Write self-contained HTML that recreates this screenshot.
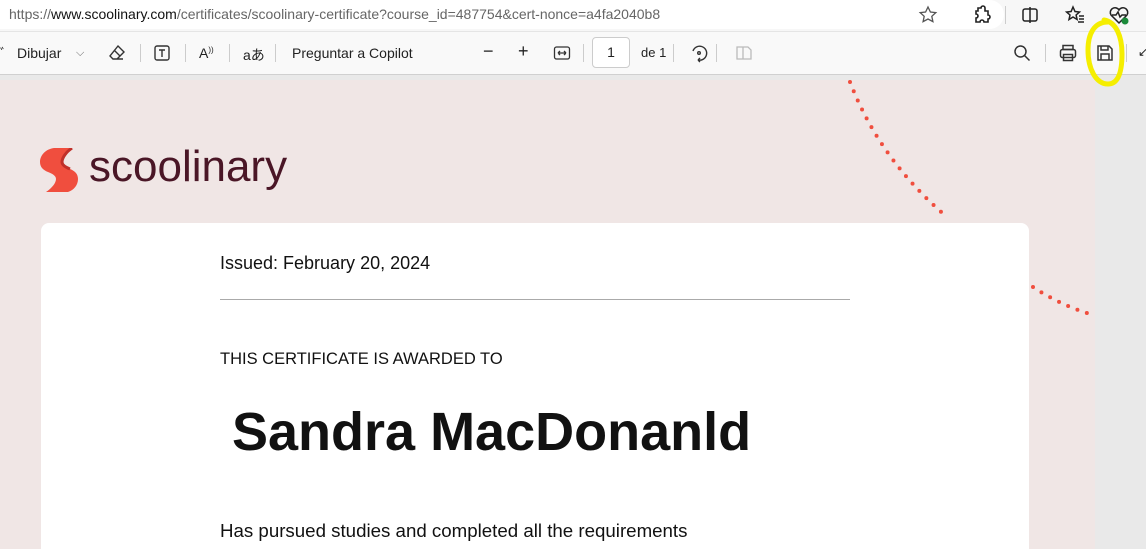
<!DOCTYPE html>
<html style="overflow:hidden"><head><style>
html,body{overflow:hidden;height:549px}
body{margin:0;width:1146px;height:549px;overflow:hidden;position:relative;font-family:"Liberation Sans",sans-serif;background:#e9e9e9}
.addr{position:absolute;left:0;top:0;width:1146px;height:31px;background:#f7f7f7}
.url{position:absolute;left:0;top:0;width:1004px;height:29px;background:#fff;border-radius:0 15px 15px 0;font-size:14px;color:#666;line-height:29px;padding-left:9px;box-sizing:border-box}
.url b{font-weight:normal;color:#111}
.tb{position:absolute;left:0;top:31px;width:1146px;height:42px;background:#f9f9f9;border-top:1px solid #e5e5e5;border-bottom:1px solid #d0d0d0;font-size:14px;color:#222}
.tb span{position:absolute;top:13px}
.sep{position:absolute;top:12px;width:1px;height:18px;background:#ccc}
.page{position:absolute;left:0;top:80px;width:1095px;height:469px;background:#f0e6e5;overflow:hidden}
.card{position:absolute;left:41px;top:143px;width:988px;height:340px;background:#fff;border-radius:8px}
.t{position:absolute;color:#111;white-space:nowrap}
</style></head><body>
<div class="addr"><div class="url">https://<b>www.scoolinary.com</b>/certificates/scoolinary-certificate?course_id=487754&amp;cert-nonce=a4fa2040b8</div>
<svg style="position:absolute;left:918px;top:5px" width="20" height="20" viewBox="0 0 20 20"><path d="M10 2l2.4 5 5.4.6-4 3.7 1.1 5.3L10 14l-4.9 2.6 1.1-5.3-4-3.7 5.4-.6z" fill="none" stroke="#555" stroke-width="1.3"/></svg>
<svg style="position:absolute;left:970px;top:4px" width="22" height="22" viewBox="0 0 22 22" fill="none" stroke="#222" stroke-width="1.6"><path d="M8 4h3a2 2 0 014 0v3h3v4a2 2 0 010 4v3h-4a2 2 0 00-4 0H6v-4a2 2 0 000-4V7h2z"/></svg>
<div class="sep" style="top:6px;left:1005px;height:18px"></div>
<svg style="position:absolute;left:1020px;top:5px" width="20" height="20" viewBox="0 0 20 20" fill="none" stroke="#222" stroke-width="1.5"><rect x="3" y="4" width="14" height="12" rx="2"/><path d="M10 2v16"/></svg>
<svg style="position:absolute;left:1064px;top:4px" width="22" height="22" viewBox="0 0 22 22" fill="none" stroke="#222" stroke-width="1.5"><path d="M9 3l2 4.5 4.5.5-3.4 3 1 4.5L9 13l-4 2.5 1-4.5-3.4-3 4.5-.5z"/><path d="M15 12h5M15 15h5M14 18h6"/></svg>
<svg style="position:absolute;left:1108px;top:4px" width="22" height="22" viewBox="0 0 22 22" fill="none" stroke="#222" stroke-width="1.5"><path d="M11 19L3 11a4.5 4.5 0 018-5 4.5 4.5 0 018 5z"/><path d="M4 11h4l2-3 2 5 2-2h4"/><circle cx="17" cy="17" r="3.5" fill="#1a8a3a" stroke="none"/></svg>
</div>
<div class="tb">
<span style="left:0;top:12px">ﾞ</span><span style="left:17px">Dibujar</span><span style="left:76px;font-size:11px;color:#666;top:15px">⌵</span>
<svg style="position:absolute;left:107px;top:11px" width="20" height="20" viewBox="0 0 20 20" fill="none" stroke="#333" stroke-width="1.4"><path d="M11 3l6 6-7 7H6l-3-3zM7 7l6 6M6 16h10"/></svg>
<div class="sep" style="left:140px"></div>
<svg style="position:absolute;left:153px;top:12px" width="18" height="18" viewBox="0 0 18 18" fill="none" stroke="#333" stroke-width="1.4"><rect x="2" y="2" width="14" height="14" rx="2"/><path d="M6 6h6M9 6v7"/></svg>
<div class="sep" style="left:185px"></div>
<span style="left:199px">A<sup style="font-size:8px">))</sup></span>
<div class="sep" style="left:229px"></div>
<span style="left:243px;font-family:'Liberation Sans','Noto Sans CJK JP',sans-serif">aあ</span>
<div class="sep" style="left:275px"></div>
<span style="left:292px">Preguntar a Copilot</span>
<span style="left:483px;font-size:18px;top:9px">−</span><span style="left:518px;font-size:18px;top:9px">+</span>
<svg style="position:absolute;left:553px;top:13px" width="18" height="16" viewBox="0 0 18 16" fill="none" stroke="#333" stroke-width="1.3"><rect x="1.5" y="2" width="15" height="12" rx="2"/><path d="M5 8h8M5 8l2-2M5 8l2 2M13 8l-2-2M13 8l-2 2"/></svg>
<div class="sep" style="left:583px"></div>
<div style="position:absolute;left:592px;top:5px;width:38px;height:31px;background:#fff;border:1px solid #ccc;border-radius:4px;box-sizing:border-box;text-align:center;line-height:29px">1</div>
<span style="left:641px;font-size:13px">de 1</span>
<div class="sep" style="left:673px"></div>
<svg style="position:absolute;left:689px;top:11px" width="20" height="20" viewBox="0 0 20 20" fill="none" stroke="#333" stroke-width="1.4"><path d="M4 8a7 7 0 1 1 5 9M9 17l2-2M9 17l2 2"/><circle cx="10" cy="10" r="1.3"/></svg>
<div class="sep" style="left:716px"></div>
<svg style="position:absolute;left:735px;top:13px" width="18" height="16" viewBox="0 0 18 16" fill="none" stroke="#bbb" stroke-width="1.3"><path d="M2 2h6v12H2zM8 2h5l3 3v9H8"/></svg>
<svg style="position:absolute;left:1013px;top:12px" width="18" height="18" viewBox="0 0 18 18" fill="none" stroke="#333" stroke-width="1.5"><circle cx="7.5" cy="7.5" r="5.5"/><path d="M11.5 11.5l5 5"/></svg>
<div class="sep" style="left:1045px"></div>
<svg style="position:absolute;left:1058px;top:11px" width="20" height="20" viewBox="0 0 20 20" fill="none" stroke="#333" stroke-width="1.5"><rect x="5" y="2.5" width="10" height="4"/><rect x="2.5" y="6.5" width="15" height="8" rx="2"/><rect x="5.5" y="11.5" width="9" height="6"/></svg>
<svg style="position:absolute;left:1095px;top:11px" width="20" height="20" viewBox="0 0 20 20" fill="none" stroke="#333" stroke-width="1.5"><path d="M3 3h11l3 3v11H3z"/><path d="M6 3v4h7V3M6 17v-6h8v6"/></svg>
<div class="sep" style="left:1126px"></div>
<span style="left:1138px;font-size:12px">↙</span>
</div>
<div class="page">
<svg style="position:absolute;left:40px;top:68px" width="38" height="44" viewBox="0 0 38 44"><path d="M14 0h18c-6 4-10 10-10 14 0 3 3 5 8 7 5 2 8 5 8 10 0 6-4 11-10 13H6c6-4 10-9 10-13 0-3-3-5-8-7C3 22 0 19 0 14 0 7 6 1 14 0z" fill="#f04e3e"/><path d="M32 0c-6 4-10 10-10 14 0 3 3 5 8 7" fill="none" stroke="#c0302a" stroke-width="3"/></svg>
<div class="t" style="left:89px;top:62px;font-size:44px;color:#4a1626">scoolinary</div>
<svg style="position:absolute;left:0;top:0" width="1095" height="469">
<path d="M850 2 Q880 80 947 137" fill="none" stroke="#f04e3e" stroke-width="4" stroke-linecap="round" stroke-dasharray="0 10"/>
<path d="M1033 207 Q1060 225 1093 235" fill="none" stroke="#f04e3e" stroke-width="4" stroke-linecap="round" stroke-dasharray="0 10"/>
</svg>
<div class="card">
<div class="t" style="left:179px;top:30px;font-size:18px">Issued: February 20, 2024</div>
<div style="position:absolute;left:179px;top:76px;width:630px;height:1px;background:#aaa"></div>
<div class="t" style="left:179px;top:127px;font-size:16.5px">THIS CERTIFICATE IS AWARDED TO</div>
<div class="t" style="left:191px;top:178px;font-size:54px;font-weight:bold">Sandra MacDonanld</div>
<div class="t" style="left:179px;top:297px;font-size:18.7px">Has pursued studies and completed all the requirements</div>
</div>
</div>
<svg style="position:absolute;left:1080px;top:14px" width="50" height="80" viewBox="0 0 50 80"><path d="M28 8 C14 8 8 20 8 36 C8 55 16 70 28 70 C38 70 42 58 42 40 C42 22 36 8 24 6" fill="none" stroke="#f5ee00" stroke-width="5" stroke-linecap="round"/></svg>
</body></html>
